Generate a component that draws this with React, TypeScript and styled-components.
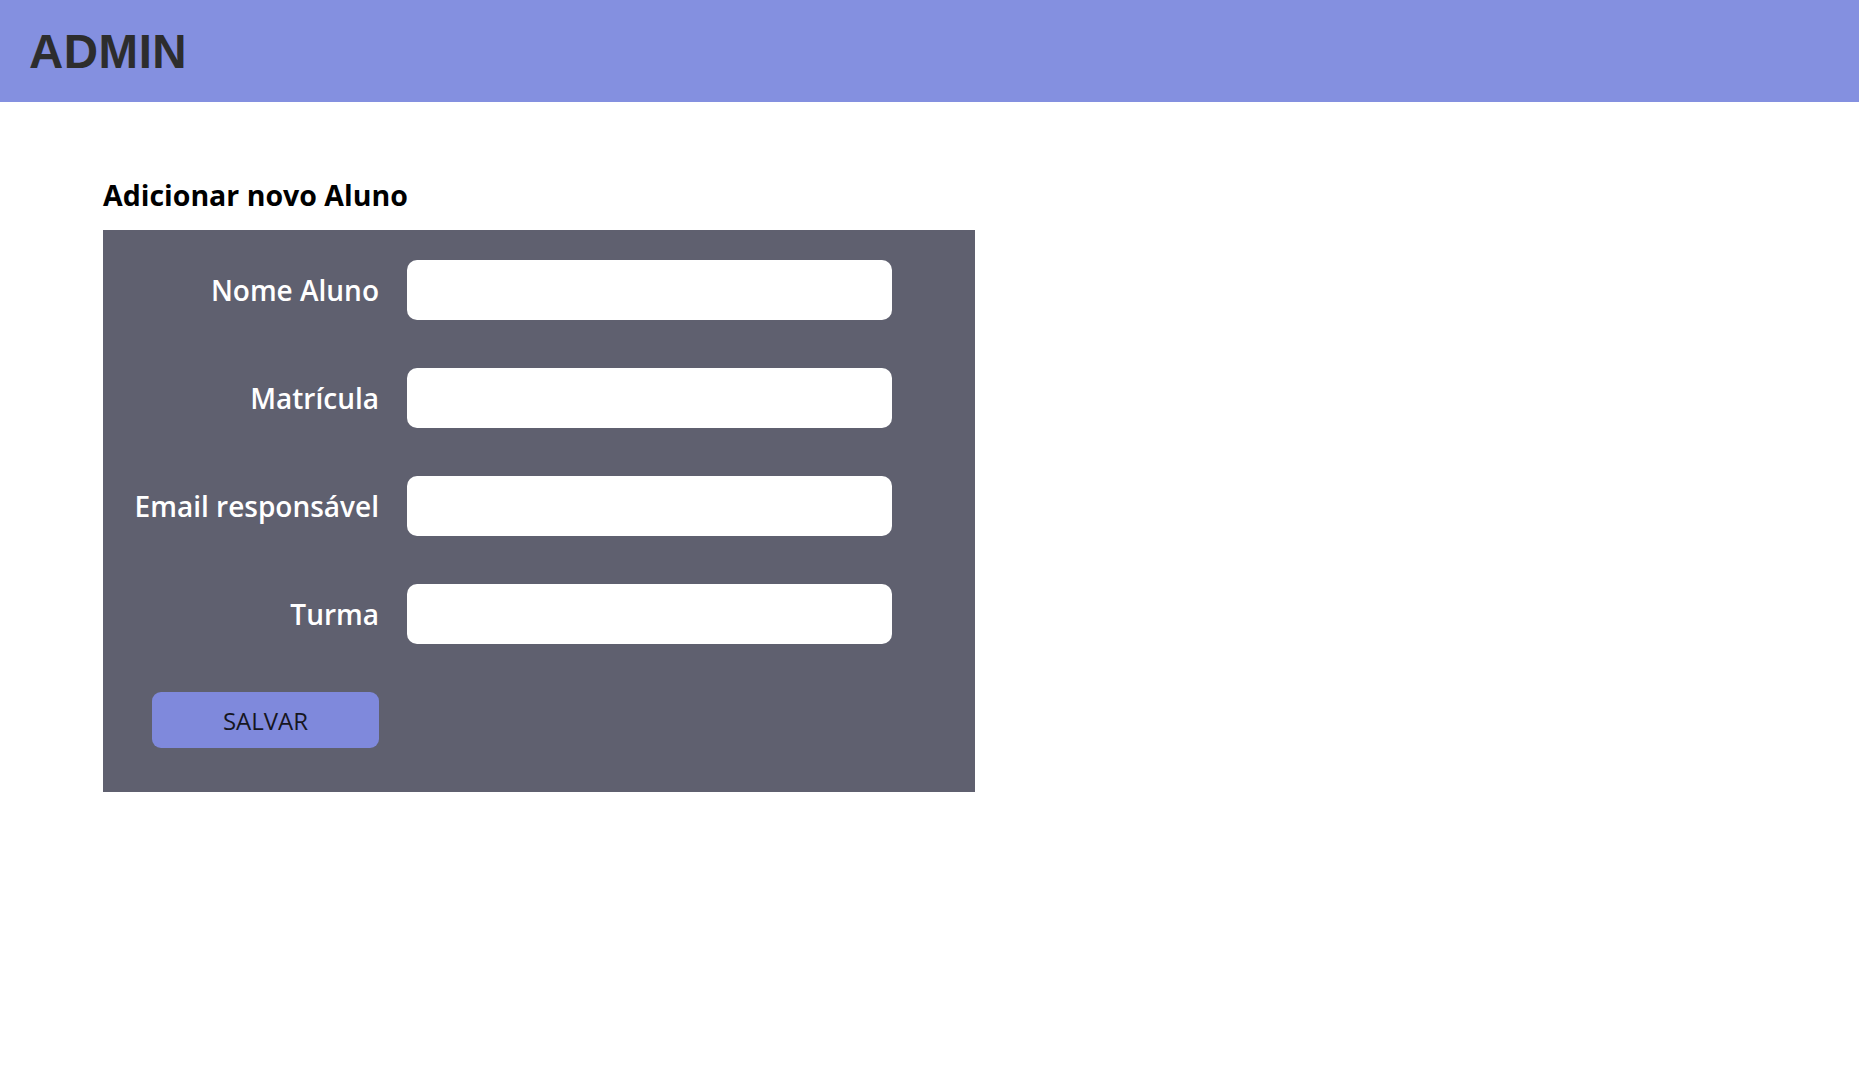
import React from "react";
import styled, { createGlobalStyle } from "styled-components";

const Global = createGlobalStyle`
  html, body { margin: 0; padding: 0; background: #ffffff; }
  body { font-family: "Open Sans", "Noto Sans", sans-serif; }
  * { box-sizing: border-box; }
`;

const Header = styled.header`
  height: 102px;
  background: #8490e0;
  display: flex;
  align-items: center;
  padding-left: 29px;
`;

const Brand = styled.h1`
  margin: 0;
  font-family: "Liberation Sans", Arial, sans-serif;
  font-weight: 700;
  font-size: 47.5px;
  color: #2d2d2d;
  letter-spacing: 0.5px;
`;

const Main = styled.main`
  padding: 0 0 0 103px;
`;

const Title = styled.h2`
  margin: 0;
  padding-top: 76px;
  height: 128px;
  font-size: 28.5px;
  font-weight: 700;
  line-height: 34px;
  color: #000;
`;

const Panel = styled.form`
  width: 872px;
  background: #5f606f;
  padding: 30px 0 44px 26px;
  display: grid;
  grid-template-columns: 250px 485px;
  column-gap: 28px;
  row-gap: 48px;
  align-items: center;
`;

const Label = styled.label`
  justify-self: end;
  white-space: nowrap;
  color: #ffffff;
  font-size: 28px;
  font-weight: 600;
`;

const Input = styled.input`
  height: 60px;
  width: 485px;
  border: none;
  border-radius: 10px;
  background: #ffffff;
  outline: none;
  font-size: 20px;
  padding: 0 14px;
`;

const SaveButton = styled.button`
  justify-self: end;
  width: 227px;
  height: 56px;
  border: none;
  border-radius: 9px;
  background: #7f89dc;
  color: #16161f;
  font-family: "Open Sans", sans-serif;
  font-size: 24px;
  font-weight: 400;
  cursor: pointer;
`;

const fields = ["Nome Aluno", "Matrícula", "Email responsável", "Turma"];

export default function App() {
  return (
    <>
      <Global />
      <Header>
        <Brand>ADMIN</Brand>
      </Header>
      <Main>
        <Title>Adicionar novo Aluno</Title>
        <Panel onSubmit={(e) => e.preventDefault()}>
          {fields.map((f) => (
            <React.Fragment key={f}>
              <Label>{f}</Label>
              <Input type="text" />
            </React.Fragment>
          ))}
          <SaveButton type="submit">SALVAR</SaveButton>
        </Panel>
      </Main>
    </>
  );
}
